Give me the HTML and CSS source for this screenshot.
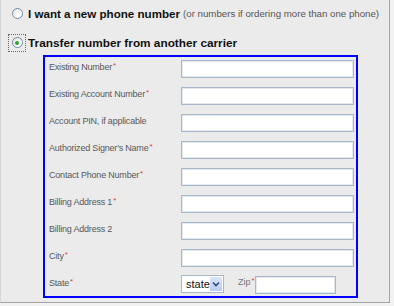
FILE: index.html
```html
<!DOCTYPE html>
<html>
<head>
<meta charset="utf-8">
<link rel="stylesheet" href="styles.css">
</head>
<body>
<div class="panel">
  <div class="option opt-new">
    <span class="radio"></span>
    <span class="opt-title">I want a new phone number</span>
    <span class="opt-note">(or numbers if ordering more than one phone)</span>
  </div>
  <div class="option opt-transfer">
    <span class="focus"><span class="radio checked"><span class="dot"></span></span></span>
    <span class="opt-title">Transfer number from another carrier</span>
  </div>
  <div class="transfer-box">
    <div class="row"><span class="label">Existing Number<span class="req">*</span></span><span class="field"></span></div>
    <div class="row"><span class="label">Existing Account Number<span class="req">*</span></span><span class="field"></span></div>
    <div class="row"><span class="label">Account PIN, if applicable</span><span class="field"></span></div>
    <div class="row"><span class="label">Authorized Signer's Name<span class="req">*</span></span><span class="field"></span></div>
    <div class="row"><span class="label">Contact Phone Number<span class="req">*</span></span><span class="field"></span></div>
    <div class="row"><span class="label">Billing Address 1<span class="req">*</span></span><span class="field"></span></div>
    <div class="row"><span class="label">Billing Address 2</span><span class="field"></span></div>
    <div class="row"><span class="label">City<span class="req">*</span></span><span class="field"></span></div>
    <div class="row last"><span class="label">State<span class="req">*</span></span>
      <span class="select"><span class="select-text">state</span><span class="select-btn"><svg width="8" height="6" viewBox="0 0 8 6"><path d="M1 1.5 L4 4.5 L7 1.5" fill="none" stroke="#2f4a7a" stroke-width="1.6"/></svg></span></span>
      <span class="zip-label">Zip<span class="req">*</span></span>
      <span class="field zip"></span>
    </div>
  </div>
</div>
</body>
</html>
```
FILE: styles.css
```css
html, body {
  margin: 0;
  padding: 0;
  background: #f2f2f2;
}
body {
  font-family: "Liberation Sans", Arial, sans-serif;
  width: 394px;
  height: 306px;
}
.panel {
  width: 390px;
  height: 303px;
  box-sizing: border-box;
  background: #ebebeb;
  border-left: 1px solid #d6d6d6;
  border-right: 1px solid #a4a4a4;
  border-bottom: 1px solid #a4a4a4;
}
.option {
  display: flex;
  align-items: center;
  white-space: nowrap;
}
.opt-new {
  height: 27px;
  padding-left: 11px;
}
.opt-transfer {
  margin-top: 3px;
  height: 25px;
  padding-left: 7px;
}
.radio {
  width: 11px;
  height: 11px;
  box-sizing: border-box;
  border: 1px solid #6f8aa8;
  border-radius: 50%;
  background: linear-gradient(135deg, #e2e2dc 0%, #ffffff 70%);
  display: flex;
  align-items: center;
  justify-content: center;
  flex: none;
}
.dot {
  width: 4px;
  height: 4px;
  border-radius: 50%;
  background: #2ea12e;
}
.focus {
  width: 18px;
  height: 18px;
  box-sizing: border-box;
  border: 1px dotted #6a6a6a;
  display: flex;
  align-items: center;
  justify-content: center;
  flex: none;
}
.opt-title {
  font-weight: bold;
  font-size: 12px;
  color: #111;
  flex: none;
}
.opt-new .opt-title {
  margin-left: 5px;
  font-size: 11.6px;
}
.opt-transfer .opt-title {
  margin-left: 2px;
  font-size: 11.8px;
}
.opt-note {
  font-size: 9.7px;
  color: #555;
  margin-left: 3px;
  flex: none;
}
.transfer-box {
  margin-left: 42px;
  width: 315px;
  box-sizing: border-box;
  border: 2px solid #0000ff;
  padding: 3px 2px 2px 4px;
}
.row {
  display: flex;
  align-items: flex-start;
  height: 18px;
  margin-bottom: 9px;
  white-space: nowrap;
}
.row.last {
  margin-bottom: 0;
}
.label {
  width: 132px;
  flex: none;
  font-size: 9px;
  letter-spacing: -0.2px;
  line-height: 10px;
  padding-top: 2px;
  color: #585858;
}
.req {
  color: #e03a3a;
  font-size: 8px;
  vertical-align: top;
  position: relative;
  top: -1px;
  margin-left: 1px;
}
.field {
  width: 173px;
  height: 18px;
  box-sizing: border-box;
  border: 1px solid #a9b8c8;
  box-shadow: inset 0 0 0 1px #e4e9ef;
  background: #fff;
  flex: none;
}
.select {
  width: 43px;
  height: 18px;
  box-sizing: border-box;
  border: 1px solid #a9b8c8;
  background: #fff;
  display: flex;
  align-items: center;
  margin-top: -1px;
  flex: none;
}
.select-text {
  font-size: 11px;
  color: #111;
  padding-left: 4px;
  flex: 1;
}
.select-btn {
  width: 12px;
  height: 14px;
  margin-right: 1px;
  background: linear-gradient(#dbe5fb, #b9cbf3);
  display: flex;
  align-items: center;
  justify-content: center;
}
.zip-label {
  margin-left: 14px;
  font-size: 9px;
  line-height: 10px;
  padding-top: 1px;
  color: #777;
  width: 17px;
  flex: none;
}
.field.zip {
  width: 81px;
}
```
